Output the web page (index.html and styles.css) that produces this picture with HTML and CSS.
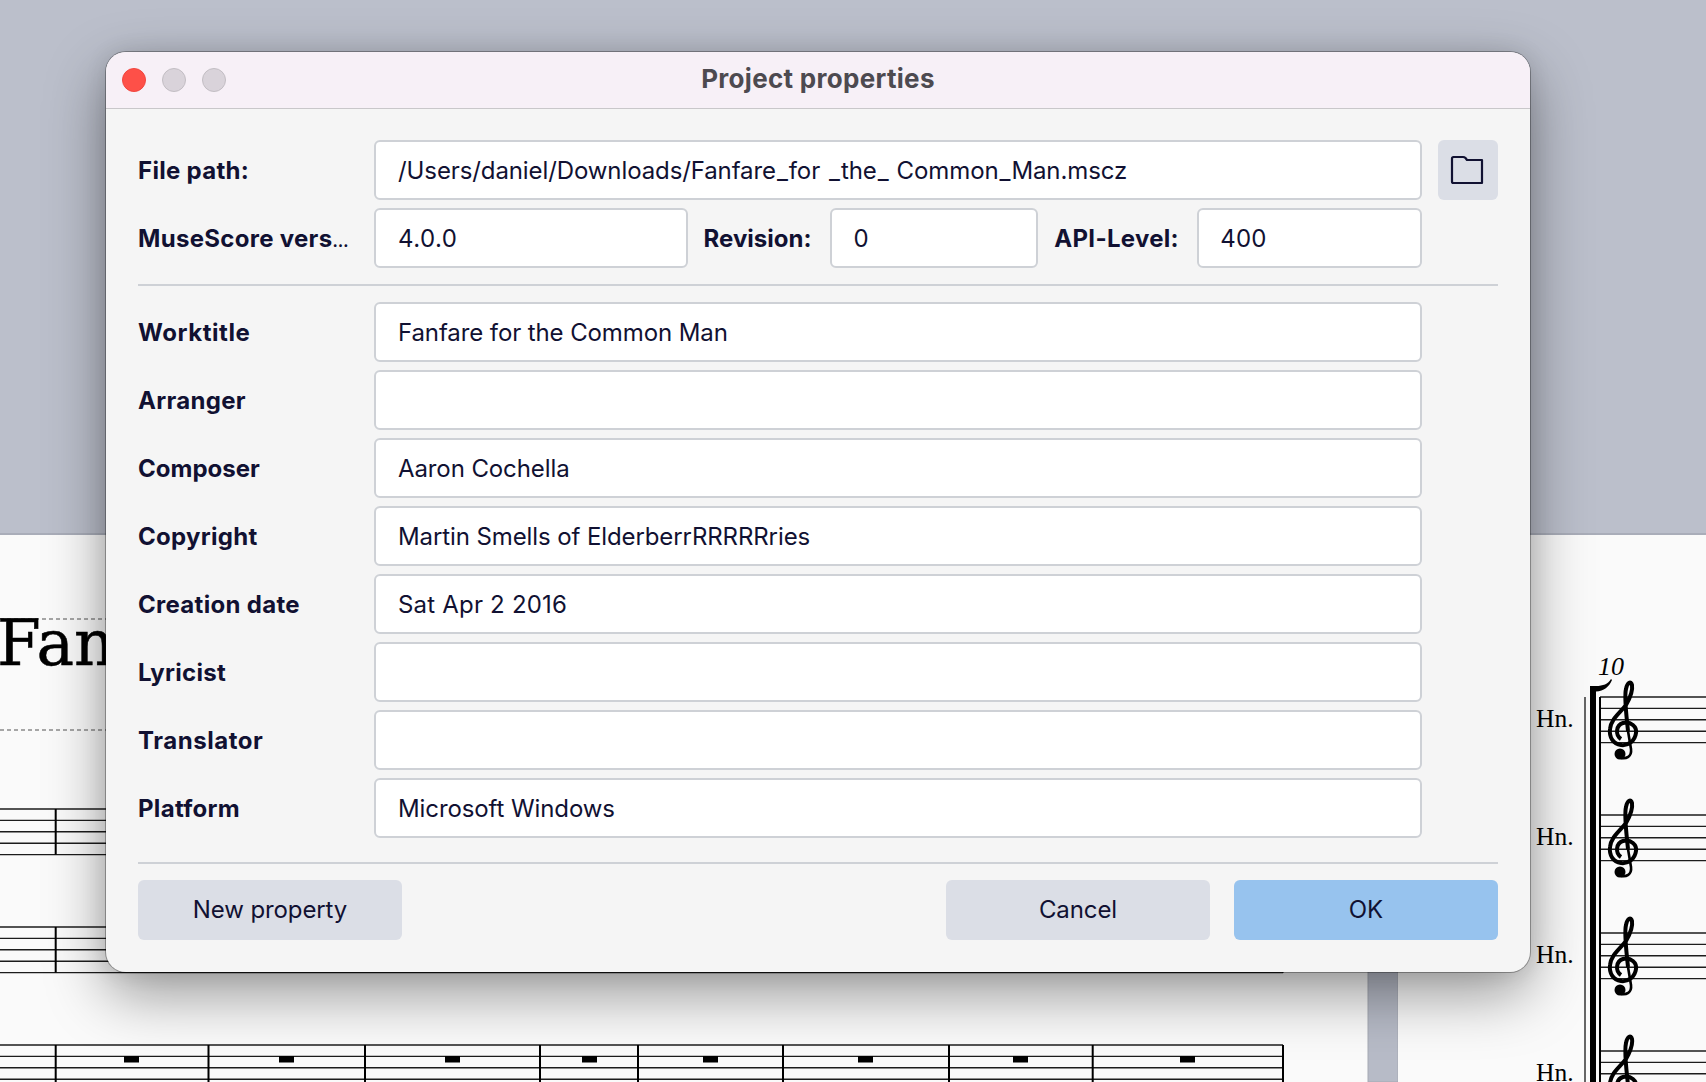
FILE: index.html
```html
<!DOCTYPE html>
<html lang="en">
<head>
<meta charset="utf-8">
<title>Project properties</title>
<link rel="stylesheet" href="styles.css">
</head>
<body>
<div class="desk">
  <svg class="score" width="1706" height="1082" viewBox="0 0 1706 1082">
    <defs>
      <path id="staff-left" d="M0 0H1283M0 11.4H1283M0 22.8H1283M0 34.2H1283M0 45.6H1283"/>
      <path id="staff-right" d="M1600 0H1706M1600 11.4H1706M1600 22.8H1706M1600 34.2H1706M1600 45.6H1706"/>
      <g id="clef">
        <path class="clef-thick" d="M13 58C7 54 8 44 15 42C23 40 29 46 28 52C27 60 20 65 13 64C5 63 1 56 2 48C3 38 12 32 18 24C22 17 25 10 24 4C23 -1 19 2 18 8C16 16 18 30 20 50"/>
        <path class="clef-thin" d="M20 50L23 68C24 76 18 78 13 77"/>
        <circle cx="12" cy="73" r="5.500"/>
      </g>
    </defs>
    <rect class="paper" x="0" y="534" width="1368" height="548"/>
    <rect class="gutter-edge" x="1368" y="534" width="30" height="548"/>
    <rect class="paper" x="1398" y="534" width="308" height="548"/>
    <path class="paper-top" d="M0 534H1706"/>

    <path class="frame" d="M0 619H110M0 730H110"/>
    <text class="title-text" x="-3" y="665">Fan</text>

    <g class="staff">
      <use href="#staff-left" y="809"/>
      <use href="#staff-left" y="927"/>
      <use href="#staff-left" y="1045"/>
    </g>
    <path class="bar" d="M55.7 809V854.6M55.7 927V972.6M55.7 1045V1082M208.500 1045V1082M365 1045V1082M540 1045V1082M638 1045V1082M783 1045V1082M949 1045V1082M1092.700 1045V1082M1283 1045V1082M1283 927V972.600"/>
    <g class="rests">
      <rect x="124" y="1056" width="15" height="6.500"/>
      <rect x="279" y="1056" width="15" height="6.500"/>
      <rect x="445" y="1056" width="15" height="6.500"/>
      <rect x="582" y="1056" width="15" height="6.500"/>
      <rect x="703" y="1056" width="15" height="6.500"/>
      <rect x="858" y="1056" width="15" height="6.500"/>
      <rect x="1013" y="1056" width="15" height="6.500"/>
      <rect x="1180" y="1056" width="15" height="6.500"/>
    </g>

    <g class="staff">
      <use href="#staff-right" y="697"/>
      <use href="#staff-right" y="815"/>
      <use href="#staff-right" y="933"/>
      <use href="#staff-right" y="1051"/>
    </g>
    <path class="bar-grey" d="M1585 697V1082"/>
    <path class="bar" d="M1600 697V1082"/>
    <path class="bar-thick" d="M1593 687V1082"/>
    <path class="bracket" d="M1590 686H1596C1603 686 1608 684 1611 679L1612 680C1609 687 1604 691 1596 691.500H1590Z"/>
    <text class="measure" x="1598" y="675">10</text>
    <text class="hn" x="1536" y="727">Hn.</text>
    <text class="hn" x="1536" y="845">Hn.</text>
    <text class="hn" x="1536" y="963">Hn.</text>
    <text class="hn" x="1536" y="1081">Hn.</text>
    <use href="#clef" x="1608" y="681"/>
    <use href="#clef" x="1608" y="799"/>
    <use href="#clef" x="1608" y="917"/>
    <use href="#clef" x="1608" y="1035"/>
  </svg>

  <section class="dialog">
    <header class="titlebar">
      <div class="lights">
        <span class="light light-close"></span>
        <span class="light"></span>
        <span class="light"></span>
      </div>
      <h1 class="dialog-title">Project properties</h1>
    </header>
    <div class="body">
      <div class="info">
        <div class="row">
          <div class="label">File path:</div>
          <div class="field grow">/Users/daniel/Downloads/Fanfare<span class="us">_</span>for<span class="us us-before">_</span>the<span class="us us-after">_</span>Common<span class="us">_</span>Man.mscz</div>
          <div class="icon-btn">
            <svg width="34" height="30" viewBox="0 0 34 30"><path class="folder" d="M2 3.500Q2 2 3.500 2H13Q14.500 2 15.500 3L17 5H32V28H3.500Q2 28 2 26.500Z"/></svg>
          </div>
        </div>
        <div class="row short">
          <div class="label">MuseScore vers<span class="dots">…</span></div>
          <div class="field f-version num">4.0.0</div>
          <div class="label inline l-rev tight">Revision:</div>
          <div class="field f-rev num">0</div>
          <div class="label inline l-api">API-Level:</div>
          <div class="field f-api num">400</div>
        </div>
      </div>
      <hr class="rule rule-a">
      <div class="props">
        <div class="row"><div class="label wide">Worktitle</div><div class="field grow">Fanfare for the Common Man</div></div>
        <div class="row"><div class="label">Arranger</div><div class="field grow"></div></div>
        <div class="row"><div class="label tight">Composer</div><div class="field grow">Aaron Cochella</div></div>
        <div class="row"><div class="label">Copyright</div><div class="field grow">Martin Smells of ElderberrRRRRRries</div></div>
        <div class="row"><div class="label">Creation date</div><div class="field grow num">Sat Apr 2 2016</div></div>
        <div class="row"><div class="label">Lyricist</div><div class="field grow"></div></div>
        <div class="row"><div class="label wide">Translator</div><div class="field grow"></div></div>
        <div class="row"><div class="label">Platform</div><div class="field grow">Microsoft Windows</div></div>
      </div>
      <hr class="rule rule-b">
      <div class="actions">
        <button class="btn">New property</button>
        <div class="spacer"></div>
        <button class="btn">Cancel</button>
        <button class="btn btn-ok">OK</button>
      </div>
    </div>
  </section>
</div>
</body>
</html>
```

FILE: styles.css
```css
* { box-sizing: border-box; }
html, body { margin: 0; padding: 0; }
body { font-family: Inter, "Noto Sans", sans-serif; color: #111132; }

.desk {
  position: relative;
  width: 1706px;
  height: 1082px;
  overflow: hidden;
  background: #bbbfcb;
}

/* Score canvas behind the dialog */
.score { position: absolute; left: 0; top: 0; display: block; }
.paper { fill: #fafafa; }
.gutter-edge { fill: #b7bbc7; stroke: #a5a9b3; stroke-width: 1; }
.paper-top { stroke: #a9adb9; stroke-width: 2; fill: none; }
.frame { stroke: #8a8a8a; stroke-width: 1.500; stroke-dasharray: 4 3; fill: none; }
.title-text { font-family: "DejaVu Serif", serif; font-size: 63px; fill: #000; stroke: #000; stroke-width: 0.500; }
.staff { stroke: #1c1c1c; stroke-width: 1.400; fill: none; }
.bar { stroke: #000; stroke-width: 2; fill: none; }
.bar-grey { stroke: #666; stroke-width: 2; fill: none; }
.bar-thick { stroke: #000; stroke-width: 6; fill: none; }
.bracket { fill: #000; }
.rests { fill: #000; }
.measure { font-family: "Liberation Serif", serif; font-style: italic; font-size: 26px; fill: #000; }
.hn { font-family: "Liberation Serif", serif; font-size: 25.500px; fill: #000; }
.clef-thick { fill: none; stroke: #000; stroke-width: 4; }
.clef-thin { fill: none; stroke: #000; stroke-width: 2.600; }

/* Dialog window */
.dialog {
  position: absolute;
  left: 106px;
  top: 52px;
  width: 1424px;
  height: 920px;
  border-radius: 20px;
  background: #f5f5f5;
  box-shadow: 0 0 0 1px rgba(0, 0, 0, 0.3), 0 0 22px rgba(0, 0, 0, 0.1), 0 22px 60px rgba(0, 0, 0, 0.4);
  display: flex;
  flex-direction: column;
  overflow: hidden;
}

.titlebar {
  position: relative;
  flex: none;
  height: 57px;
  background: #f7f0f7;
  border-bottom: 1px solid #c9c7ca;
  display: flex;
  align-items: center;
  justify-content: center;
}
.lights {
  position: absolute;
  left: 16px;
  top: 16px;
  display: flex;
  gap: 16px;
}
.light {
  width: 24px;
  height: 24px;
  border-radius: 50%;
  background: #d9d3da;
  border: 1px solid #c2bdc3;
}
.light-close { background: #fe5048; border-color: #f0463f; }
.dialog-title {
  margin: 0 0 3px;
  font-size: 26px;
  font-weight: 700;
  letter-spacing: 0.3px;
  color: #4d4a50;
}

.body {
  flex: 1;
  padding: 31px 32px 0;
  display: flex;
  flex-direction: column;
}
.info, .props { display: flex; flex-direction: column; gap: 8px; }

.row { display: flex; align-items: center; height: 60px; }
.short { padding-right: 76px; }

.label {
  flex: none;
  width: 236px;
  font-size: 24px;
  font-weight: 700;
  letter-spacing: 0.3px;
  white-space: nowrap;
  color: #111132;
}
.inline { width: auto; }
.tight { letter-spacing: 0; }
.wide { letter-spacing: 0.55px; }
.dots { letter-spacing: -3px; font-size: 16px; }
.l-rev { width: 142px; padding-left: 16px; }
.l-api { width: 159px; padding-left: 16px; }

.field {
  height: 60px;
  border: 2px solid #ced1d6;
  border-radius: 6px;
  background: #fff;
  padding: 0 22px;
  font-size: 24px;
  line-height: 58px;
  letter-spacing: -0.1px;
  white-space: nowrap;
  color: #111132;
}
.num { letter-spacing: 0.2px; }
.f-version { width: 314px; letter-spacing: 0.5px; }
.f-rev { width: 209px; }
.f-api { width: 225px; padding-left: 21px; }
.grow { flex: none; width: 1048px; }

.us { margin: 0 1px; }
.us-before { margin-left: 9px; }
.us-after { margin-right: 8px; }

.icon-btn {
  flex: none;
  width: 60px;
  height: 60px;
  margin-left: 16px;
  padding-right: 2px;
  border-radius: 6px;
  background: #dbdee6;
  display: flex;
  align-items: center;
  justify-content: center;
}
.folder { fill: none; stroke: #111132; stroke-width: 2.200; stroke-linejoin: round; }

.rule { flex: none; width: 100%; height: 2px; margin: 0; border: 0; background: #ced1d6; }
.rule-a { margin: 16px 0 16px; }
.rule-b { margin: 24px 0 16px; }

.actions { display: flex; gap: 24px; }
.spacer { flex: 1; }
.btn {
  width: 264px;
  height: 60px;
  border: 0;
  border-radius: 6px;
  background: #dbdee6;
  font-family: inherit;
  font-size: 24px;
  letter-spacing: -0.1px;
  color: #111132;
  padding: 0 0 2px;
}
.btn-ok { background: #97c3ee; }
```
